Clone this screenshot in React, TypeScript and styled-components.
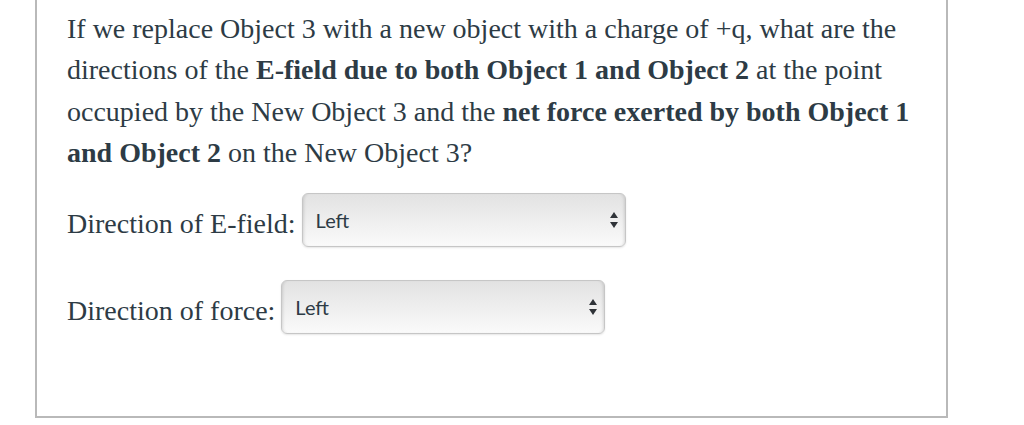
import { createGlobalStyle } from "styled-components";
import styled from "styled-components";

const Global = createGlobalStyle`
  html, body {
    margin: 0;
    padding: 0;
    background: #fff;
  }
  body {
    font-family: "Liberation Serif", "Times New Roman", serif;
    color: #2d3b45;
  }
`;

export default function App() {
  return (
    <Page>
      <Global />
      <Card>
        <Question>
          If we replace Object 3 with a new object with a charge of +q, what are the directions
          of the <b>E-field due to both Object 1 and Object 2</b> at the point occupied by the New
          Object 3 and the <b>net force exerted by both Object 1 and Object 2</b> on the New Object
          3?
        </Question>
        <Answers>
          <Row>
            <Label>Direction of E-field:</Label>
            <Dropdown value="Left" />
          </Row>
          <Row>
            <Label>Direction of force:</Label>
            <Dropdown value="Left" />
          </Row>
        </Answers>
      </Card>
    </Page>
  );
}

function Dropdown({ value }: { value: string }) {
  return (
    <Field>
      <Select defaultValue={value}>
        <option>Left</option>
        <option>Right</option>
        <option>Up</option>
        <option>Down</option>
        <option>Zero</option>
      </Select>
      <Arrows width="8" height="16" viewBox="0 0 8 16">
        <path d="M4 0 L8 6 L0 6 Z" fill="#2f3338" />
        <path d="M0 10 L8 10 L4 16 Z" fill="#2f3338" />
      </Arrows>
    </Field>
  );
}

const Page = styled.div`
  padding-left: 35px;
  width: 913px;
`;

const Card = styled.div`
  box-sizing: border-box;
  width: 913px;
  height: 418px;
  border: 2px solid #b9b9b9;
  border-top: 0;
  padding: 8px 30px 0 30px;
`;

const Question = styled.p`
  margin: 0 0 20px 0;
  font-size: 28px;
  line-height: 41.3px;
  b {
    font-weight: 700;
  }
`;

const Answers = styled.div`
  display: flex;
  flex-direction: column;
  gap: 33px;
`;

const Row = styled.div`
  display: flex;
  align-items: center;
  gap: 6px;
  height: 54px;
`;

const Label = styled.span`
  font-size: 28px;
  line-height: 32px;
  padding-top: 8px;
`;

const Field = styled.div`
  position: relative;
  width: 324px;
  height: 54px;
`;

const Select = styled.select`
  appearance: none;
  -webkit-appearance: none;
  box-sizing: border-box;
  width: 100%;
  height: 100%;
  margin: 0;
  padding: 0 30px 0 13px;
  border: 1px solid #c6c6c6;
  border-radius: 6px;
  background: linear-gradient(to bottom, #e2e2e2 0%, #ededed 45%, #fafafa 100%);
  box-shadow: 0 1px 2px rgba(0, 0, 0, 0.1), inset 3px 0 3px -2px rgba(0, 0, 0, 0.12),
    inset -3px 0 3px -2px rgba(0, 0, 0, 0.12);
  font-family: Lato, "Open Sans", sans-serif;
  font-size: 20px;
  color: #2d3b45;
  outline: none;
`;

const Arrows = styled.svg`
  position: absolute;
  right: 8px;
  top: 19px;
  pointer-events: none;
`;
